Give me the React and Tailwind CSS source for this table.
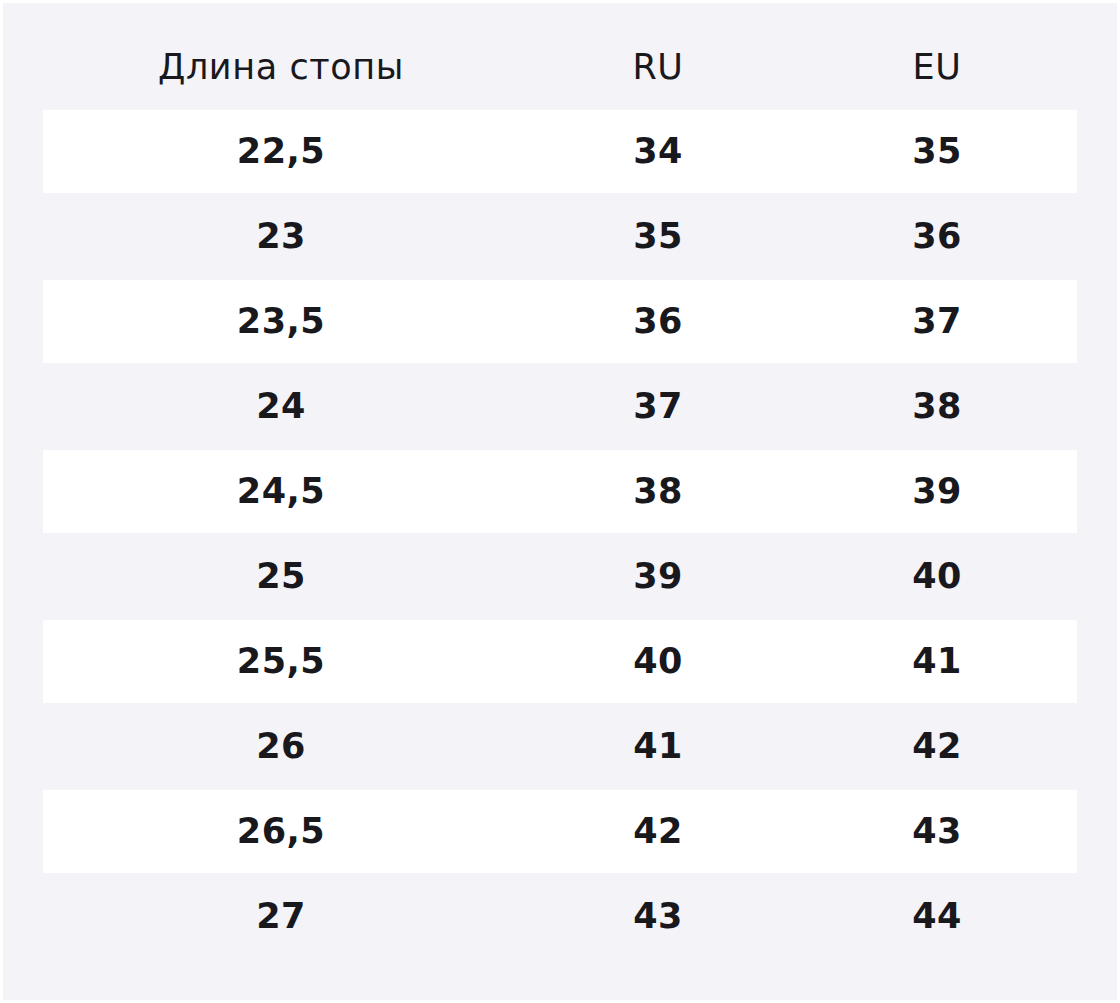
const rows = [
  ["22,5", "34", "35"],
  ["23", "35", "36"],
  ["23,5", "36", "37"],
  ["24", "37", "38"],
  ["24,5", "38", "39"],
  ["25", "39", "40"],
  ["25,5", "40", "41"],
  ["26", "41", "42"],
  ["26,5", "42", "43"],
  ["27", "43", "44"],
];

export default function App() {
  return (
    <div className="min-h-screen bg-white p-[3px] font-['DejaVu_Sans',sans-serif] text-[#18181d]">
      <div className="bg-[#f3f3f8] px-10 py-10">
        <div className="grid h-[67px] grid-cols-[476px_278px_1fr] border-b-2 border-[#f3f3f8] pt-[4px] text-[35px] leading-[40px] tracking-[0.6px]">
          <div className="text-center">Длина стопы</div>
          <div className="text-center">RU</div>
          <div className="text-center">EU</div>
        </div>
        {rows.map((r, i) => (
          <div
            key={i}
            className={
              "grid h-[85px] grid-cols-[476px_278px_1fr] items-center border-b-2 border-[#f3f3f8] text-[35px] font-bold tracking-[0.5px] " +
              (i % 2 === 0 ? "bg-white" : "bg-[#f3f3f8]")
            }
          >
            <div className="text-center">{r[0]}</div>
            <div className="text-center">{r[1]}</div>
            <div className="text-center">{r[2]}</div>
          </div>
        ))}
      </div>
    </div>
  );
}
